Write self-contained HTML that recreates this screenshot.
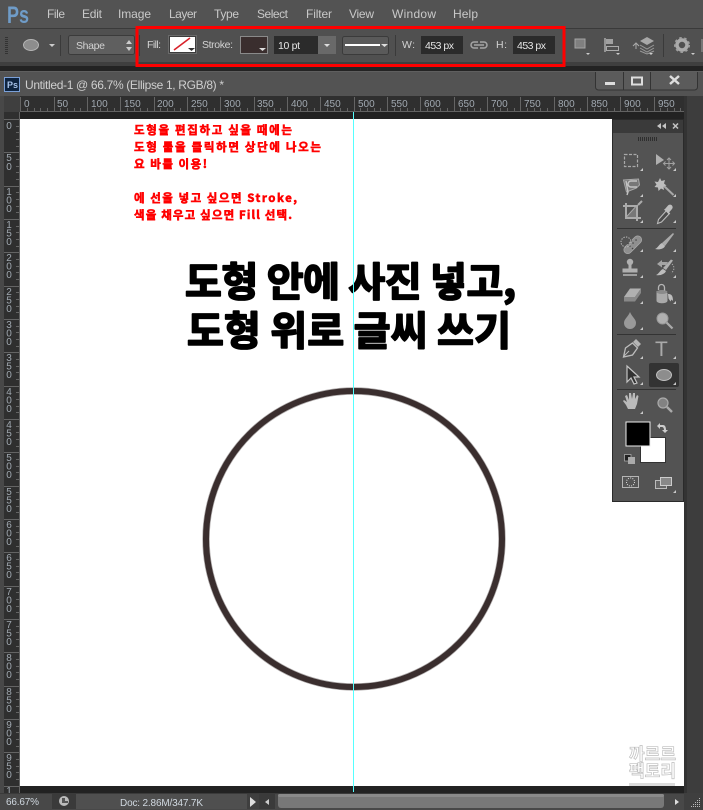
<!DOCTYPE html>
<html><head><meta charset="utf-8"><title>Photoshop</title>
<style>
html,body{margin:0;padding:0;background:#535353;width:703px;height:810px;overflow:hidden}
svg{display:block}
text{font-family:"Liberation Sans","Noto Sans CJK KR",sans-serif}
.m{font-size:12px;fill:#c9c9c9}
.o{font-size:10.5px;fill:#d2d2d2}
.r{font-size:10px;fill:#a0a8b0}
.k{font-weight:700;font-family:"Noto Sans CJK KR",sans-serif}
.red{font-size:11.5px;fill:#f00;stroke:#f00;stroke-width:.55}
.big{font-size:40px;fill:#000;stroke:#000;stroke-width:1.8;stroke-linejoin:round}
</style></head><body>
<svg width="703" height="810" viewBox="0 0 703 810" xmlns="http://www.w3.org/2000/svg">
<rect width="703" height="810" fill="#535353"/>
<!-- menu -->
<text x="7" y="23" font-size="24" font-weight="700" fill="#6f9cc8" textLength="22" lengthAdjust="spacingAndGlyphs">Ps</text>
<text class="m" x="47" y="18" textLength="18">File</text>
<text class="m" x="82" y="18" textLength="20">Edit</text>
<text class="m" x="118" y="18" textLength="33">Image</text>
<text class="m" x="169" y="18" textLength="28">Layer</text>
<text class="m" x="214" y="18" textLength="25">Type</text>
<text class="m" x="257" y="18" textLength="31">Select</text>
<text class="m" x="306" y="18" textLength="26">Filter</text>
<text class="m" x="349" y="18" textLength="25">View</text>
<text class="m" x="392" y="18" textLength="44">Window</text>
<text class="m" x="453" y="18" textLength="25">Help</text>
<rect y="28" width="703" height="1" fill="#3a3a3a"/>
<rect y="29" width="703" height="33" fill="#505050"/>
<rect y="62" width="703" height="4" fill="#3f3f3f"/>
<rect y="66" width="703" height="5" fill="#232323"/>
<!-- options bar -->
<g fill="#333"><rect x="5" y="37" width="3" height="1"/><rect x="5" y="39" width="3" height="1"/><rect x="5" y="41" width="3" height="1"/><rect x="5" y="43" width="3" height="1"/><rect x="5" y="45" width="3" height="1"/><rect x="5" y="47" width="3" height="1"/><rect x="5" y="49" width="3" height="1"/><rect x="5" y="51" width="3" height="1"/><rect x="5" y="53" width="3" height="1"/></g>
<ellipse cx="31" cy="45" rx="7.500" ry="5.500" fill="#8d8d8d" stroke="#b5b5b5"/>
<path d="M49 44h6l-3 3z" fill="#ccc"/>
<rect x="60" y="35" width="1" height="21" fill="#3a3a3a"/>
<rect x="68.500" y="35.500" width="66" height="19" rx="2" fill="#5f5f5f" stroke="#3b3b3b"/>
<text class="o" x="76" y="49" textLength="29">Shape</text>
<path d="M126 44l3-4 3 4zM126 47l3 4 3-4z" fill="#ccc"/>
<rect x="139" y="35" width="1" height="21" fill="#3a3a3a"/>
<text class="o" x="147" y="48" textLength="14">Fill:</text>
<rect x="168.500" y="35.500" width="28" height="18" fill="#3c3c3c" stroke="#6a6a6a"/>
<rect x="170" y="37" width="25" height="15" fill="#fff"/>
<path d="M174 50L190 38" stroke="#d8212a" stroke-width="1.600"/>
<path d="M188 48h7l-3.500 3z" fill="#333"/>
<text class="o" x="202" y="48" textLength="31">Stroke:</text>
<rect x="240.500" y="36.500" width="27" height="17" fill="#3a2e2e" stroke="#8a8a8a"/>
<path d="M259 48h7l-3.500 3z" fill="#ddd"/>
<rect x="274" y="36" width="44" height="18" fill="#2b2b2b"/>
<rect x="318" y="36" width="18" height="18" fill="#696969"/>
<text class="o" x="278" y="49" textLength="22" style="fill:#e6e6e6">10 pt</text>
<path d="M324 44h6l-3 3z" fill="#ddd"/>
<rect x="342.500" y="36.500" width="46" height="18" rx="2" fill="#5a5a5a" stroke="#3b3b3b"/>
<rect x="345" y="44" width="35" height="2" fill="#fff"/>
<path d="M381 44h7l-3.500 3z" fill="#ddd"/>
<rect x="395" y="35" width="1" height="21" fill="#3a3a3a"/>
<text class="o" x="402" y="48" textLength="13">W:</text>
<rect x="421" y="36" width="42" height="18" fill="#2b2b2b"/>
<text class="o" x="425" y="49" textLength="29" style="fill:#e6e6e6">453 px</text>
<path d="M478 42h-4a3 3 0 0 0 0 6h4M480 42h4a3 3 0 0 1 0 6h-4M474 45h10" fill="none" stroke="#a5a5a5" stroke-width="1.500"/>
<text class="o" x="496" y="48" textLength="11">H:</text>
<rect x="513" y="36" width="42" height="18" fill="#2b2b2b"/>
<text class="o" x="517" y="49" textLength="29" style="fill:#e6e6e6">453 px</text>
<rect x="575" y="39" width="10" height="9" fill="#808080" stroke="#a5a5a5"/>
<path d="M586 53h4l-2 2z" fill="#ccc"/>
<path d="M605 38v14" stroke="#aaa" stroke-width="1.500"/>
<rect x="606" y="39" width="7" height="5" fill="#a0a0a0"/>
<rect x="606.500" y="46.500" width="12" height="4" fill="none" stroke="#aaa"/>
<path d="M616 53h4l-2 2z" fill="#ccc"/>
<path d="M633 46l3-3 3 3M636 43v6" stroke="#aaa" fill="none"/>
<path d="M640 41l7-4 7 4-7 4z" fill="#a8a8a8"/><path d="M640 45l7 4 7-4M640 48l7 4 7-4M640 51l7 3 7-3" fill="none" stroke="#999"/>
<path d="M649 53h4l-2 2z" fill="#ccc"/>
<rect x="663" y="34" width="1" height="23" fill="#3a3a3a"/>
<circle cx="682" cy="45" r="5" fill="none" stroke="#aaa" stroke-width="3.500"/>
<circle cx="682" cy="45" r="7" fill="none" stroke="#a0a0a0" stroke-width="2" stroke-dasharray="2.500 2.500"/>
<path d="M691 53h4l-2 2z" fill="#ccc"/>
<rect x="701" y="39" width="2" height="13" fill="#777"/>
<!-- red rect -->
<rect x="137" y="27.500" width="427" height="38" fill="none" stroke="#f00" stroke-width="3"/>
<!-- doc tab -->
<rect y="71" width="703" height="25" fill="#535353"/>
<rect x="0" y="71" width="703" height="1" fill="#5f5f5f"/>
<rect x="4.500" y="77.500" width="15" height="14" fill="#0e2440" stroke="#7aa0d8"/>
<text x="7" y="88" font-size="9" font-weight="700" fill="#a9c4ea">Ps</text>
<text x="25" y="89" font-size="12" fill="#cfcfcf" textLength="199">Untitled-1 @ 66.7% (Ellipse 1, RGB/8) *</text>
<path d="M595.500 72v15a3 3 0 0 0 3 3h96a3 3 0 0 0 3-3V72" fill="#5b5b5b" stroke="#333"/>
<path d="M623.500 72v18M650.500 72v18" stroke="#333"/>
<rect x="605" y="82" width="10" height="3" fill="#ddd"/>
<rect x="632" y="77.500" width="10" height="7" fill="none" stroke="#ddd" stroke-width="2"/>
<path d="M670 76l9 8M679 76l-9 8" stroke="#ddd" stroke-width="2.500"/>
<!-- rulers -->
<rect y="96" width="703" height="697" fill="#222"/>
<rect x="0" y="96" width="4" height="697" fill="#484848"/>
<rect x="684" y="96" width="19" height="697" fill="#3d3d3d"/>
<rect x="684" y="96" width="3" height="697" fill="#333"/>
<rect x="4" y="96" width="680" height="16" fill="#2f2f2f"/>
<rect x="4" y="111" width="680" height="1" fill="#626262"/>
<rect x="4" y="96" width="16" height="16" fill="#3f3f3f"/>
<rect x="4" y="112" width="16" height="681" fill="#2f2f2f"/>
<rect x="19" y="112" width="1" height="681" fill="#626262"/>
<g stroke="#646464" stroke-width="1">
<path d="M20.500 97V111M54.500 97V111M87.500 97V111M120.500 97V111M154.500 97V111M187.500 97V111M220.500 97V111M254.500 97V111M287.500 97V111M320.500 97V111M354.500 97V111M387.500 97V111M420.500 97V111M454.500 97V111M487.500 97V111M520.500 97V111M554.500 97V111M587.500 97V111M620.500 97V111M654.500 97V111"/>
<path d="M27.500 108V111M34.500 108V111M40.500 108V111M47.500 108V111M60.500 108V111M67.500 108V111M74.500 108V111M80.500 108V111M94.500 108V111M100.500 108V111M107.500 108V111M114.500 108V111M127.500 108V111M134.500 108V111M140.500 108V111M147.500 108V111M160.500 108V111M167.500 108V111M174.500 108V111M180.500 108V111M194.500 108V111M200.500 108V111M207.500 108V111M214.500 108V111M227.500 108V111M234.500 108V111M240.500 108V111M247.500 108V111M260.500 108V111M267.500 108V111M274.500 108V111M280.500 108V111M294.500 108V111M300.500 108V111M307.500 108V111M314.500 108V111M327.500 108V111M334.500 108V111M340.500 108V111M347.500 108V111M360.500 108V111M367.500 108V111M374.500 108V111M380.500 108V111M394.500 108V111M400.500 108V111M407.500 108V111M414.500 108V111M427.500 108V111M434.500 108V111M440.500 108V111M447.500 108V111M460.500 108V111M467.500 108V111M474.500 108V111M480.500 108V111M494.500 108V111M500.500 108V111M507.500 108V111M514.500 108V111M527.500 108V111M534.500 108V111M540.500 108V111M547.500 108V111M560.500 108V111M567.500 108V111M574.500 108V111M580.500 108V111M594.500 108V111M600.500 108V111M607.500 108V111M614.500 108V111M627.500 108V111M634.500 108V111M640.500 108V111M647.500 108V111M660.500 108V111M667.500 108V111M674.500 108V111M680.500 108V111"/>
<path d="M4 119.500H19M4 152.500H19M4 186.500H19M4 219.500H19M4 252.500H19M4 286.500H19M4 319.500H19M4 352.500H19M4 386.500H19M4 419.500H19M4 452.500H19M4 486.500H19M4 519.500H19M4 552.500H19M4 586.500H19M4 619.500H19M4 652.500H19M4 686.500H19M4 719.500H19M4 752.500H19M4 786.500H19"/>
<path d="M16 126.500H19M16 132.500H19M16 139.500H19M16 146.500H19M16 159.500H19M16 166.500H19M16 172.500H19M16 179.500H19M16 192.500H19M16 199.500H19M16 206.500H19M16 212.500H19M16 226.500H19M16 232.500H19M16 239.500H19M16 246.500H19M16 259.500H19M16 266.500H19M16 272.500H19M16 279.500H19M16 292.500H19M16 299.500H19M16 306.500H19M16 312.500H19M16 326.500H19M16 332.500H19M16 339.500H19M16 346.500H19M16 359.500H19M16 366.500H19M16 372.500H19M16 379.500H19M16 392.500H19M16 399.500H19M16 406.500H19M16 412.500H19M16 426.500H19M16 432.500H19M16 439.500H19M16 446.500H19M16 459.500H19M16 466.500H19M16 472.500H19M16 479.500H19M16 492.500H19M16 499.500H19M16 506.500H19M16 512.500H19M16 526.500H19M16 532.500H19M16 539.500H19M16 546.500H19M16 559.500H19M16 566.500H19M16 572.500H19M16 579.500H19M16 592.500H19M16 599.500H19M16 606.500H19M16 612.500H19M16 626.500H19M16 632.500H19M16 639.500H19M16 646.500H19M16 659.500H19M16 666.500H19M16 672.500H19M16 679.500H19M16 692.500H19M16 699.500H19M16 706.500H19M16 712.500H19M16 726.500H19M16 732.500H19M16 739.500H19M16 746.500H19M16 759.500H19M16 766.500H19M16 772.500H19M16 779.500H19"/>
</g>
<text class="r" x="24" y="107">0</text><text class="r" x="57" y="107">50</text><text class="r" x="91" y="107">100</text><text class="r" x="124" y="107">150</text><text class="r" x="157" y="107">200</text><text class="r" x="191" y="107">250</text><text class="r" x="224" y="107">300</text><text class="r" x="257" y="107">350</text><text class="r" x="291" y="107">400</text><text class="r" x="324" y="107">450</text><text class="r" x="358" y="107">500</text><text class="r" x="391" y="107">550</text><text class="r" x="424" y="107">600</text><text class="r" x="458" y="107">650</text><text class="r" x="491" y="107">700</text><text class="r" x="524" y="107">750</text><text class="r" x="558" y="107">800</text><text class="r" x="591" y="107">850</text><text class="r" x="624" y="107">900</text><text class="r" x="658" y="107">950</text>
<g text-anchor="middle">
<text class="r" x="9" y="129">0</text>
<text class="r" x="9" y="161">5</text><text class="r" x="9" y="170">0</text>
<text class="r" x="9" y="195">1</text><text class="r" x="9" y="203.500">0</text><text class="r" x="9" y="212">0</text>
<text class="r" x="9" y="228">1</text><text class="r" x="9" y="236.500">5</text><text class="r" x="9" y="245">0</text>
<text class="r" x="9" y="261">2</text><text class="r" x="9" y="269.500">0</text><text class="r" x="9" y="278">0</text>
<text class="r" x="9" y="295">2</text><text class="r" x="9" y="303.500">5</text><text class="r" x="9" y="312">0</text>
<text class="r" x="9" y="328">3</text><text class="r" x="9" y="336.500">0</text><text class="r" x="9" y="345">0</text>
<text class="r" x="9" y="361">3</text><text class="r" x="9" y="369.500">5</text><text class="r" x="9" y="378">0</text>
<text class="r" x="9" y="395">4</text><text class="r" x="9" y="403.500">0</text><text class="r" x="9" y="412">0</text>
<text class="r" x="9" y="428">4</text><text class="r" x="9" y="436.500">5</text><text class="r" x="9" y="445">0</text>
<text class="r" x="9" y="461">5</text><text class="r" x="9" y="469.500">0</text><text class="r" x="9" y="478">0</text>
<text class="r" x="9" y="495">5</text><text class="r" x="9" y="503.500">5</text><text class="r" x="9" y="512">0</text>
<text class="r" x="9" y="528">6</text><text class="r" x="9" y="536.500">0</text><text class="r" x="9" y="545">0</text>
<text class="r" x="9" y="561">6</text><text class="r" x="9" y="569.500">5</text><text class="r" x="9" y="578">0</text>
<text class="r" x="9" y="595">7</text><text class="r" x="9" y="603.500">0</text><text class="r" x="9" y="612">0</text>
<text class="r" x="9" y="628">7</text><text class="r" x="9" y="636.500">5</text><text class="r" x="9" y="645">0</text>
<text class="r" x="9" y="661">8</text><text class="r" x="9" y="669.500">0</text><text class="r" x="9" y="678">0</text>
<text class="r" x="9" y="695">8</text><text class="r" x="9" y="703.500">5</text><text class="r" x="9" y="712">0</text>
<text class="r" x="9" y="728">9</text><text class="r" x="9" y="736.500">0</text><text class="r" x="9" y="745">0</text>
<text class="r" x="9" y="761">9</text><text class="r" x="9" y="769.500">5</text><text class="r" x="9" y="778">0</text>
<text class="r" x="9" y="794">1</text>
</g>
<!-- canvas -->
<rect x="20" y="119" width="664" height="667" fill="#fff"/>
<text class="k red" x="134" y="134" textLength="158">도형을 편집하고 싶을 때에는</text>
<text class="k red" x="134" y="151" textLength="187">도형 툴을 클릭하면 상단에 나오는</text>
<text class="k red" x="134" y="168" textLength="73">요 바를 이용!</text>
<text class="k red" x="134" y="202" textLength="163">에 선을 넣고 싶으면 Stroke,</text>
<text class="k red" x="134" y="219" textLength="158">색을 채우고 싶으면 Fill 선택.</text>
<text class="k big" x="185" y="296" textLength="331">도형 안에 사진 넣고,</text>
<text class="k big" x="187" y="345" textLength="324">도형 위로 글씨 쓰기</text>
<circle cx="354" cy="539" r="148" fill="none" stroke="#b0acac" stroke-width="7.400"/>
<circle cx="354" cy="539" r="148" fill="none" stroke="#3a2e2e" stroke-width="6"/>
<rect x="353" y="112" width="1" height="680" fill="#5ff"/>
<!-- watermark -->
<text class="k" x="629" y="760" fill="#fff" stroke="#bdbdbd" stroke-width=".7" font-size="17" textLength="47">까르르</text>
<text class="k" x="629" y="777" fill="#fff" stroke="#bdbdbd" stroke-width=".7" font-size="17" textLength="47">팩토리</text>
<rect x="629" y="783" width="46" height="3" fill="#dcdcdc"/>
<!-- tool panel -->
<rect x="612.500" y="119.500" width="71" height="382" fill="#535353" stroke="#2a2a2a"/>
<rect x="613" y="120" width="70" height="13" fill="#3a3a3a"/>
<path d="M661 123v6l-4-3zM666 123v6l-4-3z" fill="#c4c4c4"/>
<path d="M673 123.500l5 5M678 123.500l-5 5" stroke="#c4c4c4" stroke-width="1.500"/>
<g fill="#2e2e2e"><rect x="638" y="137" width="1" height="4"/><rect x="640" y="137" width="1" height="4"/><rect x="642" y="137" width="1" height="4"/><rect x="644" y="137" width="1" height="4"/><rect x="646" y="137" width="1" height="4"/><rect x="648" y="137" width="1" height="4"/><rect x="650" y="137" width="1" height="4"/><rect x="652" y="137" width="1" height="4"/><rect x="654" y="137" width="1" height="4"/><rect x="656" y="137" width="1" height="4"/></g>
<path d="M617 228.500h59M617 334.500h59M617 389.500h59" stroke="#333"/>
<rect x="649" y="363" width="30" height="24" rx="2" fill="#333"/>
<g fill="#c8c8c8">
<path d="M643 168v3h-3zM676 168v3h-3zM643 194v3h-3zM676 194v3h-3zM643 220v3h-3zM676 220v3h-3zM643 249v3h-3zM676 249v3h-3zM643 275v3h-3zM676 275v3h-3zM643 301v3h-3zM676 301v3h-3zM643 327v3h-3zM643 356v3h-3zM676 356v3h-3zM643 382v3h-3zM676 382v3h-3zM643 411v3h-3zM676 490v3h-3z"/>
</g>
<!-- marquee -->
<rect x="624.500" y="154.500" width="13" height="12" fill="none" stroke="#a8a8a8" stroke-width="1.200" stroke-dasharray="3 1.500"/>
<!-- move -->
<path d="M656 154v11l8-5z" fill="#b0b0b0"/>
<path d="M669 158.500v10M664 163.500h10M667 160l2-2 2 2M667 167l2 2 2-2M665.500 161.500l-2 2 2 2M672.500 161.500l2 2-2 2" fill="none" stroke="#a0a0a0" stroke-width="1"/>
<!-- lasso -->
<path d="M623.500 180l15-1 1 6-3 3-10 4z" fill="#777" stroke="#a8a8a8" stroke-width="1"/>
<path d="M637 181h-6a3 3 0 0 0 0 6h6M626 181l2 11-1 3" fill="none" stroke="#c4c4c4" stroke-width="1.400"/>
<!-- wand -->
<path d="M664 186l9.500 9" stroke="#a8a8a8" stroke-width="2"/>
<path d="M660 178l1.500 3 3.500-1-1 3.500 2.500 2-3 1 .5 3.500-3-1.500-2.500 2.500-.5-3.500-3.500-.5 2-2.500-2-3 3.500.5z" fill="#bdbdbd"/>
<!-- crop -->
<path d="M626 203v15h15M623 206h14v15M626 218l11-12M638 205l4-4" fill="none" stroke="#ababab" stroke-width="2"/>
<path d="M627 217l9-10v10z" fill="#777"/>
<!-- eyedropper -->
<path d="M658.500 219.500l8-9 3 3-8 8.500-4 1.500z" fill="#4a4a4a" stroke="#bbb" stroke-width="1.100"/>
<path d="M665 209l3-3.500a2.500 2.500 0 0 1 4 3.500l-3 3.500 1 1-1 1-5-5z" fill="#bdbdbd"/>
<!-- healing -->
<path d="M625 247l10-10a3.800 3.800 0 0 1 5.500 5.500l-10 10a3.800 3.800 0 0 1-5.500-5.500z" fill="#8f8f8f" stroke="#a8a8a8" stroke-width=".8"/>
<path d="M630 246h.1M633 243h.1M636 240h.1M632.500 248.500h.1M628 243.500h.1M631 240.500h.1" stroke="#444" stroke-width="1.500" stroke-linecap="round"/>
<circle cx="626" cy="242" r="5" fill="none" stroke="#bdbdbd" stroke-width="1" stroke-dasharray="1.300 1.300"/>
<!-- brush -->
<path d="M662 243l11-10 1 1-9 12z" fill="#aaa"/>
<path d="M655 249c3-1 4-5 7-6l3 3c-1 3-6 4-10 3z" fill="#bdbdbd"/>
<!-- stamp -->
<circle cx="630" cy="262" r="3.200" fill="#b0b0b0"/><path d="M628.500 264h3v4.500h6v4h-15v-4h6z" fill="#b0b0b0"/><path d="M623 275h14" stroke="#bdbdbd" stroke-width="1.400"/>
<!-- history brush -->
<path d="M663 268l8-8.500 2 1-7 9.500z" fill="#b0b0b0"/><path d="M656 275c3-1 4-5 7-6l3 2c-1 3-6 5-10 4z" fill="#bdbdbd"/>
<path d="M657 264l5-4v2h6l-2 3h-4v2.500z" fill="#a5a5a5"/>
<path d="M672 264a5.500 5.500 0 0 1-1 9" fill="none" stroke="#aaa" stroke-dasharray="1.300 1.300"/>
<!-- eraser -->
<path d="M624 297l6-8.500h11l-6 8.500z" fill="#b0b0b0"/><path d="M624 297h11v4.500h-11zM635 297l6-8.500v4.500l-6 8.500z" fill="#888"/>
<!-- bucket -->
<path d="M656.500 291l11 2v8a5.500 2.500 0 0 1-11-.5z" fill="#aaa"/><ellipse cx="662" cy="292" rx="5.500" ry="2" fill="#8a8a8a"/><path d="M658.500 290v-2.500a3 3 0 0 1 6 0v3" fill="none" stroke="#b5b5b5" stroke-width="1.300"/><path d="M668 294c3 0 5 1 5 7l-1.500-1.500-1 2-2-3z" fill="#bdbdbd"/>
<!-- blur -->
<path d="M630 312c-2 5-6 7-6 11a6 6 0 0 0 12 0c0-4-4-6-6-11z" fill="#9a9a9a"/>
<!-- dodge -->
<circle cx="662.500" cy="318.500" r="5.500" fill="#b0b0b0" stroke="#999"/><path d="M666.500 322.500l6 6" stroke="#aaa" stroke-width="2.200"/>
<!-- pen -->
<path d="M623.500 357l2-9 7-5 5 5-5 7z" fill="#4f4f4f" stroke="#bdbdbd" stroke-width="1.300"/><path d="M624 356l5-5" stroke="#bbb"/><path d="M633 342l3-3 5 5-3 3z" fill="#b5b5b5"/>
<!-- type -->
<text x="655" y="356" font-size="21" font-family="Liberation Serif, serif" fill="#aaa">T</text>
<!-- path select -->
<path d="M627 366v16l4-4 3 6 3-1-3-6h5z" fill="#333" stroke="#c4c4c4" stroke-width="1.200"/>
<!-- ellipse tool -->
<ellipse cx="664" cy="375" rx="7.500" ry="5.500" fill="#8d8d8d" stroke="#c0c0c0"/>
<!-- hand -->
<path d="M626 405l-3-4 1-1 3 2-2-6 2-1 2 5v-7h2l1 6 1-6h2v6l2-4 1.500 1-1.500 8-2 5h-7z" fill="#bbb"/>
<!-- zoom -->
<circle cx="663" cy="403" r="5" fill="#828282" stroke="#aaa" stroke-width="1.200"/><path d="M667 407l5 5" stroke="#aaa" stroke-width="2.400"/>
<!-- colours -->
<rect x="640.500" y="437.500" width="25" height="25" fill="#fff" stroke="#333"/>
<rect x="626" y="422" width="24" height="24" fill="#000" stroke="#eee" stroke-width="1"/>
<path d="M657 426l3-3v2h3c2 0 3 2 3 5h2l-3 3-3-3h2c0-2-1-3-2-3h-2v2z" fill="#ccc"/>
<rect x="624.500" y="454.500" width="6.500" height="6.500" fill="#222" stroke="#aaa" stroke-width=".8"/>
<rect x="628" y="457" width="7" height="7" fill="#aaa"/>
<!-- mask & screen -->
<rect x="622.500" y="476.500" width="16" height="11" fill="#555" stroke="#b5b5b5"/>
<circle cx="630.500" cy="482" r="4" fill="none" stroke="#ddd" stroke-dasharray="1 1.300"/>
<rect x="655.500" y="480.500" width="11" height="8" fill="#666" stroke="#bbb"/>
<rect x="660.500" y="477.500" width="11" height="8" fill="#888" stroke="#ccc"/>
<!-- status bar -->
<rect y="793" width="703" height="17" fill="#484848"/>
<rect y="793" width="703" height="1" fill="#3a3a3a"/>
<text x="6" y="805" font-size="10" fill="#d0d8e0" textLength="33">66.67%</text>
<rect x="52" y="794" width="24" height="15" fill="#3a3a3a"/>
<circle cx="64" cy="801" r="5" fill="#bbb"/><path d="M62 798h3v3h3v2h-6z" fill="#555"/>
<rect x="76" y="794" width="171" height="15" fill="#4f4f4f"/>
<text x="120" y="806" font-size="10" fill="#d0d8e0" textLength="83">Doc: 2.86M/347.7K</text>
<rect x="247" y="794" width="12" height="15" fill="#3f3f3f"/>
<path d="M250 797v10l6-5z" fill="#ddd"/>
<rect x="259" y="794" width="16" height="15" fill="#3a3a3a"/>
<path d="M265 802l4-3v6z" fill="#ccc"/>
<rect x="278" y="794" width="386" height="14" rx="3" fill="#787878"/>
<rect x="278" y="794" width="386" height="3" rx="1.500" fill="#8a8a8a"/>
<path d="M675 799l4 3-4 3z" fill="#ddd"/>
<rect x="684" y="793" width="19" height="17" fill="#3f3f3f"/>
<g fill="#bbb"><rect x="699" y="798" width="1" height="1"/><rect x="697" y="800" width="1" height="1"/><rect x="699" y="800" width="1" height="1"/><rect x="695" y="802" width="1" height="1"/><rect x="697" y="802" width="1" height="1"/><rect x="699" y="802" width="1" height="1"/><rect x="693" y="804" width="1" height="1"/><rect x="695" y="804" width="1" height="1"/><rect x="697" y="804" width="1" height="1"/><rect x="699" y="804" width="1" height="1"/><rect x="691" y="806" width="1" height="1"/><rect x="693" y="806" width="1" height="1"/><rect x="695" y="806" width="1" height="1"/><rect x="697" y="806" width="1" height="1"/><rect x="699" y="806" width="1" height="1"/></g>
</svg>
</body></html>
